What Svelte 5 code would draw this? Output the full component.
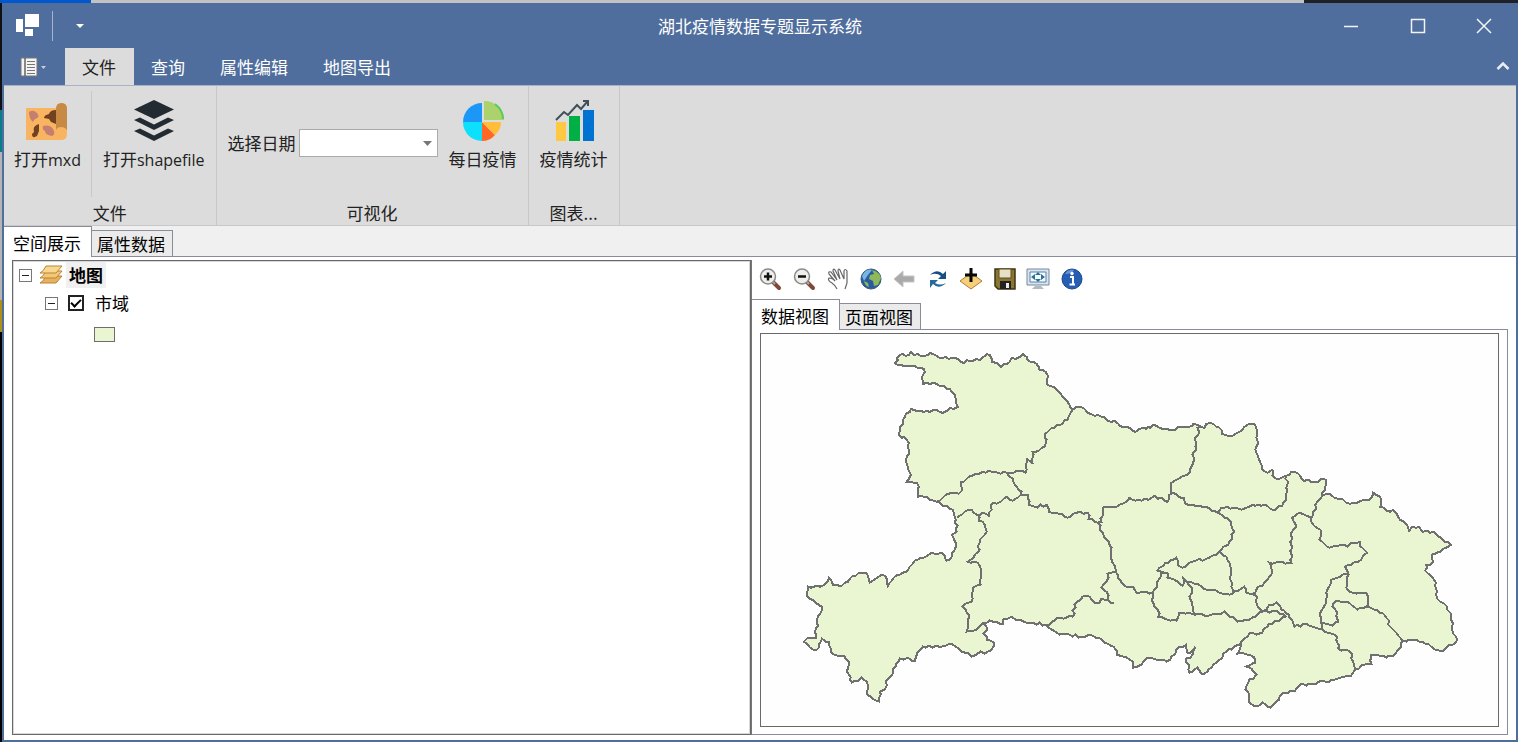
<script lang="ts">
  type Point = [number, number];

  const menuTabs = ["文件", "查询", "属性编辑", "地图导出"];
  const pageTabs = ["空间展示", "属性数据"];
  const viewTabs = ["数据视图", "页面视图"];
  const tools = [
    { id: "zoom-in", label: "放大" },
    { id: "zoom-out", label: "缩小" },
    { id: "pan", label: "平移" },
    { id: "globe", label: "全图" },
    { id: "back", label: "上一视图" },
    { id: "refresh", label: "刷新" },
    { id: "add", label: "添加数据" },
    { id: "save", label: "保存" },
    { id: "screen", label: "全屏" },
    { id: "info", label: "识别" },
  ];

  let activeMenu = $state(0);
  let activePage = $state(0);
  let activeView = $state(0);
  let layerVisible = $state(true);
  let date = $state("");

  const province =
    "895,363 900,355 909,355 911,352 914,355 928,355 930,353 940,358 955,358 961,362 970,361 980,360 987,354 990,355 992,362 997,363 1001,367 1010,362 1012,358 1020,357 1023,354 1028,360 1037,364 1040,370 1046,372 1048,378 1047,384 1057,390 1063,397 1068,402 1073,410 1077,407 1085,409 1088,413 1105,417 1108,421 1115,421 1120,426 1130,428 1136,432 1140,429 1147,429 1148,427 1157,426 1173,430 1182,427 1193,426 1194,424 1202,427 1205,428 1207,424 1211,423 1222,430 1223,434 1229,436 1240,432 1250,424 1255,424 1257,428 1258,433 1257,438 1259,443 1256,450 1258,455 1260,460 1263,470 1268,473 1273,470 1273,476 1277,479 1287,476 1292,472 1298,473 1302,479 1315,482 1322,479 1327,480 1326,487 1323,496 1330,494 1335,498 1343,499 1347,503 1358,503 1362,501 1370,500 1374,493 1377,495 1381,497 1381,507 1388,511 1394,510 1397,513 1401,520 1405,522 1410,531 1413,527 1420,527 1424,532 1435,532 1440,537 1452,545 1433,555 1434,562 1427,565 1426,571 1432,576 1437,583 1438,592 1437,595 1441,602 1448,607 1452,617 1453,630 1457,637 1457,643 1447,648 1440,651 1432,647 1423,642 1417,640 1403,641 1402,647 1397,653 1387,658 1380,656 1372,655 1372,664 1363,665 1356,670 1352,676 1336,680 1310,684 1300,686 1296,691 1285,693 1277,702 1271,708 1263,703 1257,707 1250,703 1250,695 1246,690 1250,680 1257,675 1252,669 1247,667 1256,663 1255,658 1248,655 1238,654 1242,642 1227,652 1208,672 1202,674 1198,668 1190,673 1187,659 1194,654 1196,647 1191,653 1188,653 1187,645 1180,647 1172,657 1167,662 1160,660 1147,659 1142,665 1134,668 1133,662 1127,658 1117,655 1114,647 1105,643 1102,640 1090,635 1082,637 1070,635 1057,633 1046,625 1027,623 1020,620 1012,617 1004,619 1003,624 993,622 983,623 987,628 984,634 987,640 994,643 994,647 988,652 978,654 972,657 962,652 950,644 942,647 923,647 917,655 915,661 908,658 900,659 893,670 890,678 886,682 885,690 880,692 879,702 868,696 867,682 862,678 852,683 847,672 849,662 845,657 837,656 831,652 829,642 822,639 816,651 810,648 804,642 810,638 816,638 817,623 822,607 807,596 808,587 820,587 826,584 829,578 833,585 842,586 853,576 862,573 866,573 870,583 882,575 887,579 888,586 896,576 907,572 915,561 932,553 942,553 947,561 952,557 956,543 952,535 957,532 956,520 953,510 937,502 927,497 918,497 919,487 917,483 907,482 911,475 908,467 907,457 909,450 907,440 899,435 900,427 905,417 911,409 927,411 937,410 943,413 950,408 958,407 956,402 955,395 950,389 937,384 923,384 924,369 915,366 907,366 895,363";

  const borders = [
    "1073,410 1068,420 1057,425 1045,434 1047,440 1045,447 1033,452 1033,464 1027,459 1026,473 1020,471 1007,473",
    "1007,473 983,472 972,476 961,482 962,488 959,494 952,493 943,498 937,502",
    "1007,473 1013,479 1017,487 1022,492 1021,495",
    "1021,495 1013,501 1007,497 1001,502 993,503 989,516 983,513 979,516 972,510 965,512 957,518",
    "1021,495 1028,495 1029,505 1035,507 1047,505 1049,512 1062,514 1068,518 1077,513 1088,513 1089,519 1098,523",
    "978,515 979,521 983,522 987,532 980,540 978,553 968,562 978,563 981,572 981,585 973,588 972,602 963,607 969,618 967,632 977,630 983,623",
    "1098,523 1103,533 1105,538 1110,545 1113,563 1116,572",
    "1116,572 1108,574 1107,582 1102,588 1107,592 1108,600 1114,603 1102,599 1100,603 1095,603 1090,597 1083,597 1075,605 1073,617 1058,618 1053,622 1046,625",
    "1116,572 1118,578 1122,583 1127,587 1134,587 1137,593 1153,593 1158,585 1160,579 1162,573 1169,573 1158,571 1166,563 1177,558 1179,566 1183,568 1193,562 1210,558 1220,552",
    "1098,523 1102,522 1103,508 1120,505 1130,498 1142,501 1155,496 1168,502 1170,495 1173,493 1185,498 1186,504 1203,507 1220,514 1232,523 1235,532 1230,542 1220,552",
    "1202,427 1198,428 1200,433 1196,438 1197,450 1193,455 1194,462 1191,472 1182,477 1172,483 1172,493",
    "1220,514 1222,508 1237,508 1242,510 1247,508 1253,505 1268,506 1273,510 1283,506 1287,497 1288,485 1287,476",
    "1220,552 1227,557 1230,563 1231,577 1233,594",
    "1169,573 1168,578 1175,580 1183,586 1184,579 1188,583 1198,584 1207,590 1233,594 1245,587 1247,593 1253,594",
    "1153,593 1153,602 1158,610 1159,617 1177,621 1180,613 1195,615 1193,603 1190,597 1193,588 1188,583",
    "1195,615 1212,615 1225,612 1238,622 1253,618 1263,612 1257,603 1258,597 1253,594",
    "1253,594 1268,580 1273,572 1270,563 1292,563 1292,533 1297,527 1293,518 1300,513 1313,517",
    "1323,496 1318,502 1312,522 1322,532 1320,540 1330,548 1342,545 1348,547 1352,543 1361,542 1361,547 1368,553 1362,560 1346,567 1349,574 1332,580 1327,593 1327,602 1321,613 1323,629",
    "1349,574 1347,588 1353,593 1367,593 1369,600 1368,607 1358,610 1353,606 1348,602 1337,601 1333,607 1338,613 1339,622 1333,626 1323,623",
    "1368,607 1378,610 1387,618 1392,628 1403,641",
    "1263,612 1267,610 1270,605 1277,603 1282,610 1290,615 1295,627 1307,624 1322,629 1338,637 1339,649 1352,653 1354,662 1356,670",
    "1263,612 1277,611 1286,617 1270,624 1263,633 1250,634 1242,642",
  ];

  // breaks long segments into small steps so borders look surveyed
  function roughen(line: string): string {
    const points = line.split(" ").map((pair) => pair.split(",").map(Number) as Point);
    let d = `M${points[0]}`;
    for (let i = 1; i < points.length; i++) {
      const [x1, y1] = points[i - 1];
      const [x2, y2] = points[i];
      const steps = Math.floor(Math.hypot(x2 - x1, y2 - y1) / 3);
      for (let s = 1; s < steps; s++) {
        const x = Math.round(x1 + ((x2 - x1) * s) / steps);
        const y = Math.round(y1 + ((y2 - y1) * s) / steps);
        const shift = ((x * 7 + y * 13 + s * 5) % 3) - 1;
        d += Math.abs(x2 - x1) > Math.abs(y2 - y1) ? `L${x},${y + shift}` : `L${x + shift},${y}`;
      }
      d += `L${x2},${y2}`;
    }
    return d;
  }

  const provincePath = roughen(province) + "Z";
  const borderPath = borders.map(roughen).join("");
</script>

<div class="desktop">
  <div class="window">
    <header class="title-bar">
      <svg class="app-logo" width="24" height="24" viewBox="0 0 24 24" fill="#fff">
        <path d="M9 0h14v13H9zM0 5h7v13H0zM9 15h8v7H9z" />
      </svg>
      <button class="quick-access" aria-label="自定义快速访问工具栏">
        <svg width="8" height="4" viewBox="0 0 8 4"><path d="M0 0h8L4 4z" fill="#fff" /></svg>
      </button>
      <h1>湖北疫情数据专题显示系统</h1>
      <div class="window-buttons">
        <button aria-label="最小化">
          <svg width="16" height="16" viewBox="0 0 16 16"><path d="M1 8.500h14" /></svg>
        </button>
        <button aria-label="最大化">
          <svg width="16" height="16" viewBox="0 0 16 16"><path d="M1.500 1.500h13v13h-13z" /></svg>
        </button>
        <button aria-label="关闭">
          <svg width="16" height="16" viewBox="0 0 16 16"><path d="M1 1l14 14M15 1L1 15" /></svg>
        </button>
      </div>
    </header>

    <nav class="menu-bar">
      <button class="app-menu" aria-label="应用程序菜单">
        <svg width="26" height="20" viewBox="0 0 26 20">
          <path d="M1 1h16v18H1z" fill="#f4f4f4" stroke="#777" />
          <path d="M5 1v18" stroke="#666" stroke-width="1.500" />
          <path d="M7 4.500h8M7 7.500h8M7 10.500h8M7 13.500h8M7 16.500h8" stroke="#777" />
          <path d="M21 9h5l-2.500 3z" fill="#ccc" />
        </svg>
      </button>
      {#each menuTabs as tab, i}
        <button class="menu-tab" class:active={activeMenu === i} onclick={() => (activeMenu = i)}>
          {tab}
        </button>
      {/each}
      <button class="collapse" aria-label="折叠功能区">
        <svg width="14" height="10" viewBox="0 0 14 10">
          <path d="M1.500 7L7 1.500 12.500 7" fill="none" stroke="#e8edf4" stroke-width="2.500" />
        </svg>
      </button>
    </nav>

    <section class="ribbon">
      <div class="group">
        <div class="group-items">
          <button class="ribbon-button mxd">
            <svg width="44" height="44" viewBox="0 0 44 44">
              <path d="M1 8h31v32H1z" fill="#f9b462" />
              <path d="M31 32V9q0-6 5.500-6T42 9v25q0 6-6 6H19" fill="#f9b462" />
              <path d="M31 29V9q0-6 5.500-6T42 9v21q-2-3-6-3t-5 3z" fill="#c68a45" />
              <path d="M4 12q4-3 8 1 3 4 0 5-3 1-4 4-4-3-4-10zM18 26q8-2 11 5 1 4-2 5-7-1-7-5-3-1-2-5z" fill="#c47f70" />
              <path d="M31 10v14l-5-2-2-3-5-1q0-3 5-4 1-4 7-4zM14 24v7l-2 5q-5 3-5-2l2-2q-2-6 5-8z" fill="#70421f" />
            </svg>
            <span>打开<span class="latin">mxd</span></span>
          </button>
          <button class="ribbon-button shape">
            <svg width="44" height="44" viewBox="0 0 44 44" fill="#222b31">
              <path d="M22 0l20 9.500L22 19 2 9.500z" />
              <path d="M2 20l6-2.500 14 7 14-7 6 2.500-20 10zM2 31l6-2.500 14 7 14-7 6 2.500-20 10z" />
            </svg>
            <span>打开<span class="latin">shapefile</span></span>
          </button>
        </div>
        <div class="group-label">文件</div>
      </div>
      <div class="group visual">
        <div class="group-items">
          <div class="date-field">
            <label for="date">选择日期</label>
            <div class="date-box">
              <select id="date" bind:value={date}>
                <option value=""></option>
              </select>
              <svg width="9" height="5" viewBox="0 0 9 5"><path d="M0 0h9L4.500 5z" fill="#777" /></svg>
            </div>
          </div>
          <button class="ribbon-button daily">
            <svg width="44" height="44" viewBox="0 0 44 44">
              <path d="M21 22V3A19 19 0 0 0 2 22z" fill="#1b98f7" />
              <path d="M21 22H2a19 19 0 0 0 19 19z" fill="#0ce0fd" />
              <path d="M21 22v19q8 0 13-6z" fill="#ff6825" />
              <path d="M21 22h19q0 8-6 13z" fill="#ffbd39" />
              <path d="M23 1a19 19 0 0 1 20 19H23z" fill="#acd26d" />
              <path d="M34 4q8 6 8 15" fill="none" stroke="#5acb57" stroke-width="2" />
            </svg>
            <span>每日疫情</span>
          </button>
        </div>
        <div class="group-label">可视化</div>
      </div>
      <div class="group">
        <div class="group-items">
          <button class="ribbon-button stats">
            <svg width="44" height="44" viewBox="0 0 44 44">
              <path d="M4 22h10v19H4z" fill="#ffc843" />
              <path d="M17 16h11v25H17z" fill="#00b044" />
              <path d="M31 10h11v31H31z" fill="#0072d2" />
              <path d="M4 20l8-8 4 3 9-10 4 4 6-7M31 1h5v5" fill="none" stroke="#40505b" stroke-width="2" />
            </svg>
            <span>疫情统计</span>
          </button>
        </div>
        <div class="group-label">图表...</div>
      </div>
    </section>

    <div class="page-tabs" role="tablist">
      {#each pageTabs as tab, i}
        <button
          class="tab"
          class:active={activePage === i}
          role="tab"
          aria-selected={activePage === i}
          onclick={() => (activePage = i)}
        >{tab}</button>
      {/each}
    </div>

    <main class="workspace">
      <aside class="layer-tree">
        <div class="tree-row root">
          <button class="toggle" aria-label="折叠地图"></button>
          <svg class="layers-icon" width="24" height="20" viewBox="0 0 24 20" stroke="#b98236">
            <path d="M7 11h16l-6 7H1q3-1 6-7z" fill="#e8b25c" />
            <path d="M7 6h16l-6 7H1q3-1 6-7z" fill="#f2c877" />
            <path d="M7 1h16l-6 7H1q3-1 6-7z" fill="#f8d890" />
          </svg>
          <span class="root-name">地图</span>
        </div>
        <div class="tree-row layer">
          <button class="toggle" aria-label="折叠市域"></button>
          <label>
            <input type="checkbox" bind:checked={layerVisible} />
            <span>市域</span>
          </label>
        </div>
        <div class="tree-row symbol"><span class="swatch"></span></div>
      </aside>

      <section class="map-panel">
        <div class="toolbar">
          {#each tools as tool}
            <button aria-label={tool.label} title={tool.label}>
              <svg width="24" height="24" viewBox="0 0 24 24" fill="none">
                {#if tool.id === "zoom-in" || tool.id === "zoom-out"}
                  <path d="M15 15l6 6" stroke="#83473a" stroke-width="4" stroke-linecap="round" />
                  <path d="M14 14l3 3" stroke="#aaa" stroke-width="2" />
                  <circle cx="10" cy="9.500" r="7.500" fill="#eeefe9" stroke="#8b8b8b" stroke-width="1.500" />
                  <path d="M6 9.500h8" stroke="#111" stroke-width="2.500" />
                  {#if tool.id === "zoom-in"}
                    <path d="M10 5.500v8" stroke="#111" stroke-width="2.500" />
                  {/if}
                {:else if tool.id === "pan"}
                  <path
                    d="M12 22q-2-4-5-6-5-3-3-5 4 0 6 3L4 7q-1-3 2-2l6 8-4-9q0-3 2-1l5 9-2-8q0-3 2-1l4 9V4q1-3 3 0v12l-2 6"
                    fill="#fff"
                    stroke="#666"
                    stroke-width="1.200"
                  />
                {:else if tool.id === "globe"}
                  <circle cx="12" cy="12" r="10" fill="#285b9f" stroke="#385879" />
                  <path d="M3 9q4-8 10-6l-4 5-4 6z" fill="#78b4e4" />
                  <path d="M13 3q8 2 9 8l-3 7-4 1-1-5-4-2 1-4 4-1zM5 14l4 2 1 4q-4-1-5-6z" fill="#8db95a" />
                {:else if tool.id === "back"}
                  <path d="M2 12l9-8v5h11v6H11v5z" fill="#aaa" stroke="#c5c5c5" />
                {:else if tool.id === "refresh"}
                  <path d="M4 8q7-7 13-1l3-3v8h-8l3-3q-5-4-11-1z" fill="#174f83" />
                  <path d="M20 16q-7 7-13 1l-3 4v-8h8l-3 3q5 3 11 0z" fill="#286999" />
                {:else if tool.id === "add"}
                  <path d="M12 6l11 8-11 8-11-8z" fill="#f5cf79" stroke="#b57b35" />
                  <path d="M12 1v14M6 8h12" stroke="#080808" stroke-width="3" />
                {:else if tool.id === "save"}
                  <path d="M2 2h20v20H5l-3-3z" fill="#8a7630" stroke="#3f3511" stroke-width="1.500" />
                  <path d="M6 2h12v9H6z" fill="#e5e0c6" stroke="#5c4f22" />
                  <path d="M7 14h11v8H7z" fill="#222" />
                  <path d="M13 16h3v5h-3z" fill="#eee" />
                {:else if tool.id === "screen"}
                  <path d="M1 2h22v16H1z" fill="#d9e4ed" stroke="#778999" />
                  <path d="M4 5h16v10H4z" fill="#f4faff" stroke="#5484a9" />
                  <path d="M9 19h6l3 3H6z" fill="#aebbc3" />
                  <path d="M12 5l3 3H9zM12 15l3-3H9zM5 10l4-3v6zM19 10l-4-3v6z" fill="#2b7194" />
                {:else}
                  <circle cx="12" cy="12" r="10" fill="#265eb4" stroke="#204988" />
                  <path d="M5 7q3-5 9-4-2 4-9 4z" fill="#6594d7" />
                  <circle cx="12" cy="6.500" r="1.700" fill="#fff" />
                  <path d="M10 10h3v7M9.500 17.500h5.500" stroke="#fff" stroke-width="2" />
                {/if}
              </svg>
            </button>
          {/each}
        </div>

        <div class="view-tabs" role="tablist">
          {#each viewTabs as tab, i}
            <button
              class="tab"
              class:active={activeView === i}
              role="tab"
              aria-selected={activeView === i}
              onclick={() => (activeView = i)}
            >{tab}</button>
          {/each}
        </div>
        <div class="view-page">
          <div class="map-canvas">
            {#if layerVisible}
              <svg viewBox="761 334 738 392" role="img" aria-label="湖北省市域地图">
                <path d={provincePath} fill="#eaf6d1" />
                <path d={borderPath} fill="none" />
              </svg>
            {/if}
          </div>
        </div>
      </section>
    </main>
  </div>
</div>

<style>
  :global(body) {
    margin: 0;
  }

  button {
    padding: 0;
    border: 0;
    background: none;
    color: inherit;
    font: inherit;
    cursor: pointer;
  }

  svg {
    display: block;
  }

  .desktop {
    box-sizing: border-box;
    display: flex;
    min-height: 100vh;
    padding: 3px 0 0 2px;
    background:
      linear-gradient(90deg, #0058cc 91px, #c2c2c2 91px 1304px, #202124 1304px) top / 100% 3px no-repeat,
      linear-gradient(#111 110px, #087f88 110px 152px, #b5b5b5 152px 300px, #af8f15 300px 332px, #000 332px);
    color: #222;
    font-family: "Noto Sans CJK SC", sans-serif;
    font-size: 17px;
    line-height: 24px;
  }

  .window {
    flex: 1;
    min-width: 0;
    display: flex;
    flex-direction: column;
    border: 2px solid #4f6e9d;
    border-top: 0;
    background: #fff;
  }

  .title-bar {
    display: grid;
    grid-template-columns: 1fr auto 1fr;
    grid-template-rows: 45px;
    align-items: center;
    background: #4f6e9d;
    color: #fff;
  }

  .title-bar > * {
    grid-row: 1;
  }

  .app-logo {
    grid-column: 1;
    margin-left: 12px;
  }

  .quick-access {
    grid-column: 1;
    justify-self: start;
    display: flex;
    align-items: center;
    height: 30px;
    margin-left: 48px;
    padding: 0 23px;
    border-left: 1px solid #a5b3c9;
  }

  h1 {
    grid-column: 2;
    margin: 0;
    font-size: 17px;
    font-weight: 400;
  }

  .window-buttons {
    grid-column: 3;
    justify-self: end;
    display: flex;
  }

  .window-buttons button {
    display: flex;
    align-items: center;
    justify-content: center;
    width: 67px;
    height: 45px;
  }

  .window-buttons button:last-child {
    width: 65px;
  }

  .window-buttons svg {
    fill: none;
    stroke: #f1f4f8;
    stroke-width: 1.5;
  }

  .menu-bar {
    display: flex;
    height: 37px;
    background: #4f6e9d;
    color: #fff;
  }

  .app-menu {
    width: 61px;
    padding-left: 16px;
  }

  .menu-tab {
    padding: 0 18px 0 17px;
  }

  .menu-tab.active {
    background: #dcdcdc;
    color: #222;
  }

  .collapse {
    margin-left: auto;
    padding: 0 6px;
  }

  .ribbon {
    display: flex;
    height: 139px;
    border-top: 1px solid #a7b3c8;
    border-bottom: 1px solid #c8c8c8;
    background: #dcdcdc;
  }

  .group {
    display: flex;
    flex-direction: column;
    border-right: 1px solid #c8c8c8;
  }

  .group-items {
    flex: 1;
    display: flex;
    margin-top: 5px;
  }

  .group-label {
    padding: 4px 0 0;
    line-height: 24px;
    text-align: center;
  }

  .ribbon-button {
    display: flex;
    flex-direction: column;
    align-items: center;
    gap: 3px;
    padding: 9px 11px 0;
  }

  .mxd {
    padding: 9px 10px 0;
    border-right: 1px solid #c8c8c8;
  }

  .latin {
    font-family: "Open Sans", sans-serif;
    font-size: 16px;
  }

  .date-field {
    display: flex;
    align-items: flex-start;
    gap: 3px;
    padding: 38px 0 0 11px;
  }

  .date-field label {
    line-height: 28px;
  }

  .date-box {
    display: grid;
    align-items: center;
  }

  .date-box > * {
    grid-area: 1 / 1;
  }

  .date-box svg {
    justify-self: end;
    margin-right: 6px;
    pointer-events: none;
  }

  select {
    appearance: none;
    width: 139px;
    height: 28px;
    border: 1px solid #ababab;
    border-radius: 0;
    background: #fff;
  }

  .page-tabs {
    display: flex;
    align-items: flex-end;
    height: 31px;
    background: #f0f0f0;
    box-shadow: inset 0 -1px #8b8c9a;
  }

  .tab {
    height: 27px;
    padding: 0 7px 0 5px;
    border: 1px solid #8b8c9a;
    border-left: 0;
    background: #ebebeb;
    color: #000;
    line-height: 25px;
  }

  .tab.active {
    height: 31px;
    padding: 0 10px 0 9px;
    border-bottom: 0;
    background: #fff;
    line-height: 27px;
  }

  .workspace {
    flex: 1;
    display: grid;
    grid-template-columns: 739fr 757fr;
    padding: 3px 8px 5px;
    color: #000;
  }

  .layer-tree {
    border: 1px solid #696969;
    box-shadow: inset 0 0 0 1px #d8d8d8;
  }

  .tree-row {
    display: flex;
    align-items: center;
    height: 28px;
  }

  .tree-row.root {
    padding-left: 6px;
  }

  .tree-row.layer {
    padding-left: 32px;
  }

  .tree-row.symbol {
    height: 34px;
    padding-left: 81px;
  }

  .toggle {
    width: 13px;
    height: 13px;
    border: 1px solid #777;
    background: linear-gradient(#222, #222) center / 7px 1px no-repeat;
  }

  .layers-icon {
    margin: 0 3px 0 7px;
  }

  .root-name {
    padding: 0 3px;
    background: #f0f0f0;
    font-weight: 700;
    line-height: 26px;
  }

  .layer label {
    display: flex;
    align-items: center;
    gap: 11px;
    margin-left: 10px;
  }

  input {
    appearance: none;
    display: grid;
    place-items: center;
    width: 16px;
    height: 16px;
    margin: 0;
    border: 2px solid #222;
    background: #fff;
  }

  input:checked::after {
    content: "";
    width: 8px;
    height: 4px;
    border: solid #000;
    border-width: 0 0 2px 2px;
    transform: translateY(-1px) rotate(-45deg);
  }

  .swatch {
    box-sizing: border-box;
    width: 21px;
    height: 15px;
    border: 1px solid #6e6e6e;
    background: #eaf6d1;
  }

  .map-panel {
    display: flex;
    flex-direction: column;
    border-left: 1px solid #777;
  }

  .toolbar {
    display: flex;
    justify-content: space-between;
    width: 326px;
    padding: 7px 0 8px 6px;
  }

  .view-tabs {
    display: flex;
    align-items: flex-end;
    height: 31px;
    box-shadow: inset 0 -1px #8b8c9a;
  }

  .view-page {
    flex: 1;
    display: flex;
    padding: 3px 8px 7px;
    border-right: 1px solid #8b8c9a;
    border-bottom: 1px solid #8b8c9a;
  }

  .map-canvas {
    flex: 1;
    border: 1px solid #696969;
    background: #fefefe;
  }

  .map-canvas svg {
    width: 100%;
    stroke: #707070;
    stroke-width: 2;
    shape-rendering: crispEdges;
  }
</style>
